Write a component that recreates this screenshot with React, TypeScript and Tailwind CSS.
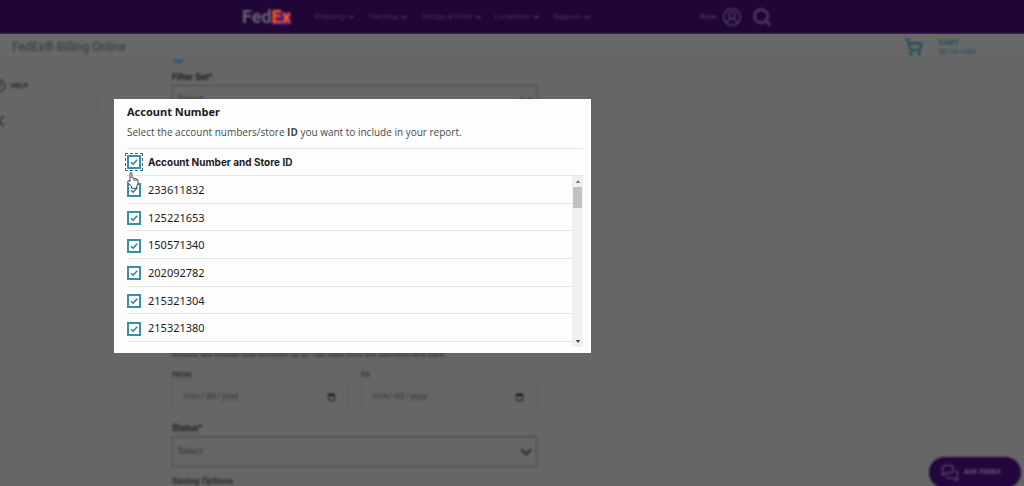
import { useState } from "react";
import { ChevronDown, ChevronLeft, CircleHelp, MessagesSquare, Search, ShoppingCart, CircleUserRound } from "lucide-react";

const navItems = ["Shipping", "Tracking", "Design & Print", "Locations", "Support"];

const accounts = [
  "233611832",
  "125221653",
  "150571340",
  "202092782",
  "215321304",
  "215321380",
];

function CheckBox({
  id,
  checked,
  onChange,
}: {
  id: string;
  checked: boolean;
  onChange: () => void;
}) {
  return (
    <span className="relative flex size-3.5 shrink-0">
      <input
        id={id}
        type="checkbox"
        checked={checked}
        onChange={onChange}
        className="size-3.5 appearance-none border-2 border-[#3a8fa3] bg-white"
      />
      {checked && (
        <svg
          viewBox="0 0 14 14"
          className="pointer-events-none absolute inset-0 size-3.5"
          fill="none"
          stroke="#2f7f93"
          strokeWidth="1.5"
        >
          <path d="M4 7.2 L6.1 9.2 L10.2 4.8" />
        </svg>
      )}
    </span>
  );
}

function Header() {
  return (
    <header className="h-[34px] shrink-0 bg-[#1f0637]">
      <div className="flex h-full items-center pl-[242px] text-[8px] text-[#49335d] blur-[1px]">
        <a
          href="#"
          className="flex w-[72px] items-center text-lg leading-4 font-bold text-[#6b6370]"
        >
          Fed
          <span className="bg-linear-to-b from-transparent from-20% via-[#4d148c] via-20% to-[#4d148c] to-85% text-[#ff6200]">
            Ex
          </span>
        </a>
        <nav className="flex gap-3">
          {navItems.map((item) => (
            <a key={item} href="#" className="flex items-center gap-px whitespace-nowrap">
              {item}
              <ChevronDown size={10} strokeWidth={3} />
            </a>
          ))}
        </nav>
        <div className="ml-auto flex w-[324px] items-center">
          <span className="w-[22px] font-bold">Krue</span>
          <CircleUserRound size={20} strokeWidth={2} className="text-[#4d3b5c]" />
          <Search size={20} strokeWidth={3} className="ml-2.5 text-[#4d3b5c]" />
        </div>
      </div>
    </header>
  );
}

function DateField({ id, label }: { id: string; label: string }) {
  return (
    <div className="flex flex-1 flex-col">
      <label htmlFor={id} className="text-[7px] leading-[10px] font-bold">
        {label}
      </label>
      <input
        id={id}
        type="date"
        className="h-[34px] w-full border border-[#5f5f5f] px-[10px] text-[9px] text-[#373737]"
      />
    </div>
  );
}

function SelectField({ id, label, height }: { id: string; label: string; height: string }) {
  return (
    <div>
      <label htmlFor={id} className="block text-[9px] leading-4 font-bold text-[#1c1c1c]">
        {label}
      </label>
      <div className="relative">
        <select
          id={id}
          className={`w-full appearance-none border border-[#4a4a4a] px-[5px] text-[9px] text-[#333] ${height}`}
        >
          <option>Select</option>
        </select>
        <ChevronDown
          size={18}
          strokeWidth={2.5}
          className="pointer-events-none absolute top-[7px] right-[2px] text-[#2a2a2a]"
        />
      </div>
    </div>
  );
}

function ReportPage() {
  return (
    <div className="flex h-full flex-col bg-[#666] font-['Roboto',sans-serif] text-[#2b2b2b]">
      <Header />
      <div className="flex h-[26px] shrink-0 items-center border-b border-[#606060] bg-[#686868] pl-3 blur-[1px]">
        <h1 className="text-[12px] text-[#373737]">FedEx® Billing Online</h1>
        <a href="#" className="mr-12 ml-auto flex items-center gap-4 text-[#204c57]">
          <ShoppingCart size={18} strokeWidth={3} />
          <span className="flex flex-col text-[8px] leading-[9px]">
            <b>CART</b>
            <span>$0.00 USD</span>
          </span>
        </a>
      </div>
      <div className="flex min-h-0 flex-1 blur-[1px]">
        <aside className="mt-2 w-[99px] shrink-0 border-t border-r border-[#5f5f5f] text-[7px]">
          <a
            href="#"
            className="flex h-[35px] items-center gap-[5px] border-b border-[#606060] font-bold"
          >
            <CircleHelp size={14} className="-ml-2" />
            HELP
          </a>
          <button type="button" aria-label="Collapse" className="flex h-[34px] items-center">
            <ChevronLeft size={18} className="-ml-2" />
          </button>
        </aside>
        <main className="ml-[73px] w-[365px] shrink-0">
          <div className="flex h-[9px] items-start pl-0.5">
            <span className="h-[3px] w-[9px] rounded-b-full bg-[#25566a]" />
          </div>
          <SelectField id="filter" label="Filter Set*" height="h-[30px]" />
          <p className="mt-[235px] text-[8px] leading-[10px] whitespace-nowrap">
            Results will include only invoices up to -180 days from the
            payment/end date.
          </p>
          <div className="mt-[10px] flex gap-3">
            <DateField id="from" label="FROM" />
            <DateField id="to" label="TO" />
          </div>
          <div className="mt-[6px]">
            <SelectField id="status" label="Status*" height="h-[31px]" />
          </div>
          <h2 className="mt-[9px] text-[9px] leading-[10px] font-bold">Saving Options</h2>
        </main>
      </div>
    </div>
  );
}

function Scrollbar() {
  return (
    <div className="flex w-[11px] shrink-0 flex-col items-center justify-between bg-[#f0f0f0] py-1">
      <div className="flex w-full flex-col items-center gap-1">
        <svg viewBox="0 0 6 4" className="h-[3px] w-1.5" fill="#777">
          <path d="M0 4 L3 0 L6 4 Z" />
        </svg>
        <span className="h-[21px] w-[9px] bg-[#c1c1c1]" />
      </div>
      <svg viewBox="0 0 6 4" className="h-[3px] w-1.5" fill="#444">
        <path d="M0 0 L3 4 L6 0 Z" />
      </svg>
    </div>
  );
}

export default function App() {
  const [selected, setSelected] = useState<string[]>(accounts);
  const allSelected = selected.length === accounts.length;

  const toggle = (account: string) => {
    setSelected(
      selected.includes(account)
        ? selected.filter((a) => a !== account)
        : [...selected, account],
    );
  };

  return (
    <div className="relative h-screen overflow-hidden bg-[#666] font-['Noto_Sans',sans-serif]">
      <ReportPage />

      <section className="absolute top-[99px] left-[114px] w-[477px] bg-[#fdfdfd] pt-[5px] pr-2 pb-[6px] pl-[13px] text-[#1c1c1c]">
        <h2 className="text-[11px] leading-4 font-bold">Account Number</h2>
        <p className="mt-1 font-['Open_Sans',sans-serif] text-[10px] leading-4 text-[#4a4a4a]">
          Select the account numbers/store <b>ID</b> you want to include in your report.
        </p>
        <div className="mt-2 flex h-[28px] items-center gap-[7px] border-t border-b border-[#e6e6e6]">
          <span className="-m-0.5 border border-dashed border-[#3a6d8c] p-px">
            <CheckBox
              id="all"
              checked={allSelected}
              onChange={() => setSelected(allSelected ? [] : accounts)}
            />
          </span>
          <label htmlFor="all" className="font-['Inter',sans-serif] text-[10px] font-bold">
            Account Number and Store ID
          </label>
        </div>
        <div className="flex h-[171px]">
          <ul className="flex h-[166px] flex-1 flex-col">
            {accounts.map((account) => (
              <li
                key={account}
                className="flex flex-1 items-center gap-[7px] border-b border-[#e6e6e6] pt-0.5 text-[11px]"
              >
                <CheckBox
                  id={account}
                  checked={selected.includes(account)}
                  onChange={() => toggle(account)}
                />
                <label htmlFor={account}>{account}</label>
              </li>
            ))}
          </ul>
          <Scrollbar />
        </div>
      </section>

      {/* hand pointer */}
      <svg
        viewBox="0 0 12 17"
        className="pointer-events-none absolute top-[172px] left-[127px] h-[17px] w-3"
        fill="#fff"
        stroke="#444"
        strokeLinejoin="round"
      >
        <path d="M3 9.5 V1.8 Q3 .6 4 .6 T5 1.8 V6 Q6.800 5.400 7 6.500 Q8.700 5.900 9 7.200 Q11 6.800 11 8.600 V11.500 L9.800 14 V16.300 H4.500 V14.500 L.8 10.300 Q.3 8.600 1.700 8.600 Z" />
        <path d="M7 6.500 V9 M9 7.200 V9" />
      </svg>

      <button
        type="button"
        className="absolute right-[3px] bottom-[-2px] flex h-[31px] w-[92px] items-center gap-[5px] rounded-full bg-[#22063d] pl-3 text-[7px] font-bold whitespace-nowrap text-[#6a5878] blur-[1px]"
      >
        <MessagesSquare size={18} strokeWidth={1.5} />
        ASK FEDEX
      </button>
    </div>
  );
}
